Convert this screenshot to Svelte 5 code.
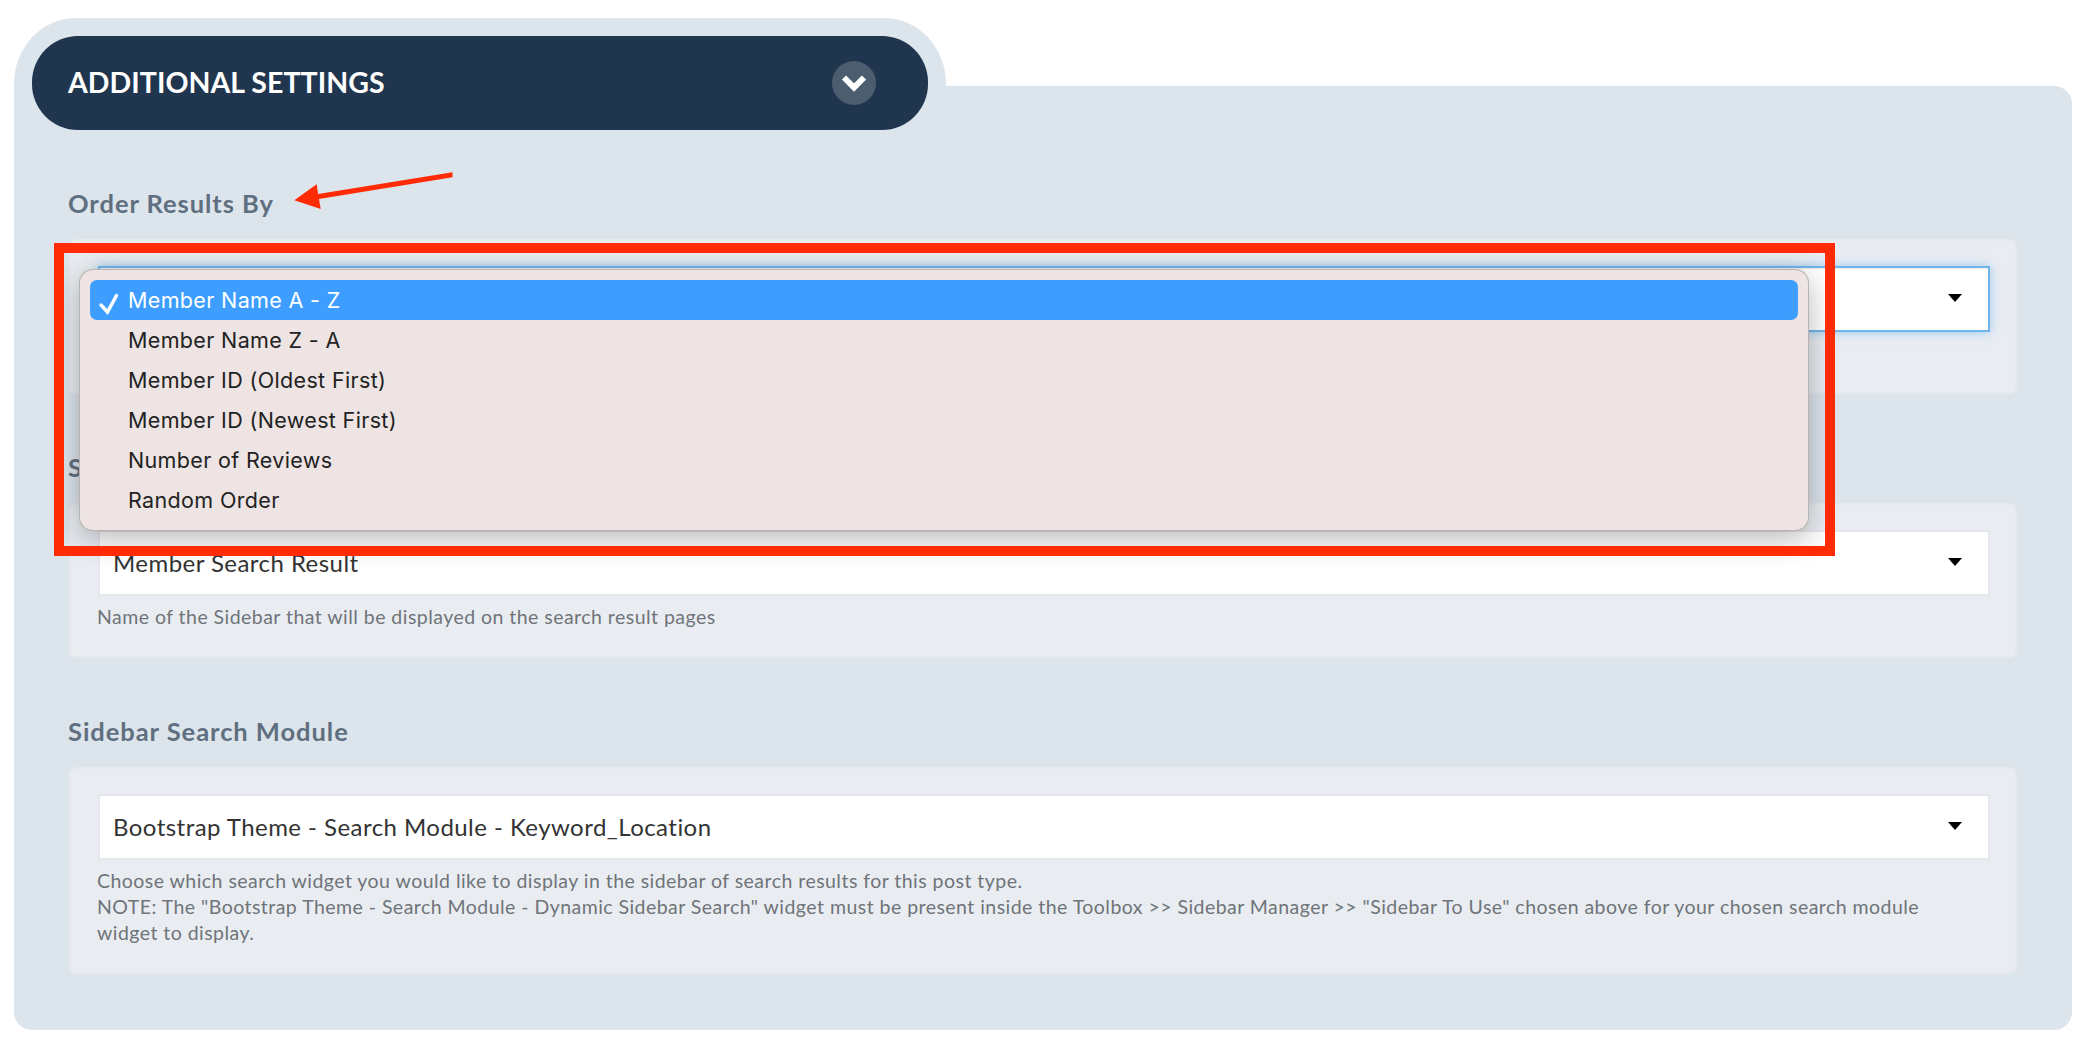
<script lang="ts">
  const options = [
    'Member Name A - Z',
    'Member Name Z - A',
    'Member ID (Oldest First)',
    'Member ID (Newest First)',
    'Number of Reviews',
    'Random Order',
  ];

  const sections = [
    { label: 'Order Results By', value: options[0], focus: true, help: ['\u00a0'] },
    {
      label: 'Sidebar To Use',
      value: 'Member Search Result',
      help: ['Name of the Sidebar that will be displayed on the search result pages'],
    },
    {
      label: 'Sidebar Search Module',
      value: 'Bootstrap Theme - Search Module - Keyword_Location',
      help: [
        'Choose which search widget you would like to display in the sidebar of search results for this post type.',
        'NOTE: The "Bootstrap Theme - Search Module - Dynamic Sidebar Search" widget must be present inside the Toolbox >> Sidebar Manager >> "Sidebar To Use" chosen above for your chosen search module widget to display.',
      ],
    },
  ];
</script>

<div class="page">
  <div class="panel">
    <div class="tab">
      <div class="head">
        <h2>ADDITIONAL SETTINGS</h2>
        <span class="toggle">
          <svg viewBox="0 0 26 20" width="26" height="20" aria-hidden="true">
            <path d="M3 4.5 L13 14.5 L23 4.5" fill="none" stroke="#fff" stroke-width="6" stroke-linecap="butt" stroke-linejoin="miter" />
          </svg>
        </span>
      </div>
    </div>

    {#each sections as s}
      <section>
        <h3>{s.label}</h3>
        <div class="card">
          <div class="select" class:focus={s.focus}>
            <span>{s.value}</span>
            <svg class="caret" viewBox="0 0 14 8" width="14" height="8" aria-hidden="true"><path d="M0 0H14L7 8Z" fill="#000" /></svg>
          </div>
          <p class="help">
            {#each s.help as line, i}
              {#if i > 0}<br />{/if}{line}
            {/each}
          </p>
        </div>
      </section>
    {/each}
  </div>

  <!-- dropdown open over first select -->
  <ul class="menu">
    {#each options as opt, i}
      <li class:sel={i === 0}>
        {#if i === 0}
          <svg class="check" viewBox="0 0 22 26" width="22" height="26" aria-hidden="true">
            <path d="M3 15 L9.5 22 L18.5 5.5" fill="none" stroke="#fff" stroke-width="3.4" stroke-linecap="round" stroke-linejoin="miter" />
          </svg>
        {/if}
        {opt}
      </li>
    {/each}
  </ul>

  <!-- annotations on top of the screenshot -->
  <div class="redbox"></div>
  <svg class="arrow" viewBox="0 0 160 42" width="160" height="42" aria-hidden="true">
    <path d="M158.5 2.3 L24 24 L22.7 14.3 L0.3 30.3 L26.7 39 L25 29 L158.5 7.3 Z" fill="#ff2b04" />
  </svg>
</div>

<style>
  :global(body) { margin: 0; background: #fff; }
  .page {
    position: relative;
    box-sizing: border-box;
    width: 2082px;
    height: 1044px;
    padding: 86px 10px 0 14px;
    font-family: "Lato", "Open Sans", sans-serif;
  }
  .panel {
    display: flow-root;
    background: #dce4ec;
    border-radius: 18px;
    padding-bottom: 56px;
  }
  .tab {
    width: 932px;
    box-sizing: border-box;
    margin-top: -68px;
    padding: 18px 18px 0;
    background: #dce4ec;
    border-radius: 62px 62px 0 0 / 66px 66px 0 0;
  }
  .head {
    display: flex;
    align-items: center;
    justify-content: space-between;
    height: 94px;
    padding: 0 52px 2px 36px;
    background: #20364f;
    border-radius: 46px;
    box-sizing: border-box;
  }
  h2 { margin: 0; color: #fff; font-size: 28.5px; font-weight: 700; letter-spacing: 0.05px; }
  .toggle {
    width: 44px;
    height: 44px;
    margin-top: 2px;
    border-radius: 50%;
    background: #4c5d70;
    display: flex;
    align-items: center;
    justify-content: center;
  }
  section { padding: 0 55px; }
  h3 {
    margin: 0;
    height: 109px;
    box-sizing: border-box;
    padding-top: 57.5px;
    color: #606f7f;
    font-size: 25.5px;
    letter-spacing: 0.95px;
    line-height: 30px;
    font-weight: 700;
    text-indent: -1px;
  }
  .card {
    box-sizing: border-box;
    padding: 25px 25px 26px 27px;
    background: #e9edf2;
    border: 2px solid #e6e9ed;
    border-radius: 7px;
  }
  .select {
    display: flex;
    align-items: center;
    justify-content: space-between;
    box-sizing: border-box;
    height: 66px;
    padding: 0 26px 2px 13px;
    background: #fff;
    border: 2px solid #e5e7ea;
    color: #333;
    font-size: 24px;
    letter-spacing: 0.45px;
  }
  .select.focus {
    border-color: #70b5ec;
    box-shadow: inset 0 1px 1px rgba(0, 0, 0, 0.08), 0 0 10px rgba(102, 175, 233, 0.6);
  }
  .help {
    margin: 8px 20px 0 -1px;
    color: #6f7479;
    font-size: 19.5px;
    letter-spacing: 0.46px;
    line-height: 26px;
  }
  .menu {
    position: absolute;
    left: 79px;
    top: 269px;
    box-sizing: border-box;
    width: 1730px;
    height: 262px;
    margin: 0;
    padding: 10px 10px;
    list-style: none;
    background: #ede4e3;
    border: 1px solid rgba(0, 0, 0, 0.22);
    border-radius: 14px;
    box-shadow: 0 8px 30px rgba(0, 0, 0, 0.28);
    font-family: "Inter", "Liberation Sans", sans-serif;
    font-size: 21.5px;
    letter-spacing: 0.35px;
    color: #222;
  }
  li {
    position: relative;
    height: 40px;
    line-height: 40px;
    padding-left: 38px;
    border-radius: 7px;
  }
  li.sel { background: #3d9eff; color: #fff; }
  .check { position: absolute; left: 8px; top: 10px; }
  .redbox {
    position: absolute;
    left: 54px;
    top: 243px;
    width: 1781px;
    height: 313px;
    box-sizing: border-box;
    border: 10px solid #ff2b04;
  }
  .arrow { position: absolute; left: 294px; top: 170px; }
</style>
